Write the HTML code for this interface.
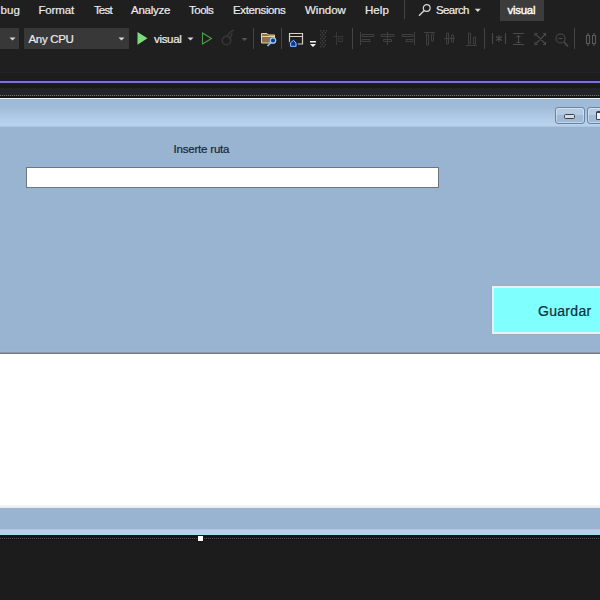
<!DOCTYPE html>
<html><head><meta charset="utf-8">
<style>
html,body{margin:0;padding:0;}
body{width:600px;height:600px;overflow:hidden;background:#1f1f1f;position:relative;font-family:"Liberation Sans",sans-serif;}
.a{position:absolute;}
.m{position:absolute;top:3.3px;font-size:11.5px;color:#ececec;-webkit-text-stroke:0.2px #ececec;line-height:14px;white-space:nowrap;letter-spacing:-0.2px;}
.sep{position:absolute;width:1px;background:#444;}
.ic{position:absolute;}
</style></head><body>
<!-- menu -->
<div class="m" style="left:0.600px;letter-spacing:0">bug</div>
<div class="m" style="left:38.500px;letter-spacing:-0.16px">Format</div>
<div class="m" style="left:94px;letter-spacing:-0.600px"><span style="letter-spacing:-2.400px">T</span>est</div>
<div class="m" style="left:131px;letter-spacing:-0.267px">Analyze</div>
<div class="m" style="left:189px;letter-spacing:-0.500px">Tools</div>
<div class="m" style="left:233px;letter-spacing:-0.379px">Extensions</div>
<div class="m" style="left:305px;letter-spacing:0">Window</div>
<div class="m" style="left:365px;letter-spacing:0.067px">Help</div>
<div class="sep" style="left:404px;top:0;height:19px;"></div>
<svg class="ic" style="left:417px;top:2px" width="16" height="16" viewBox="0 0 16 16"><circle cx="9.700" cy="6" r="3.400" fill="none" stroke="#d8d8d8" stroke-width="1.200"/><path d="M7.200 8.500 L2 13.700" stroke="#d8d8d8" stroke-width="1.300"/></svg>
<div class="m" style="left:436px;letter-spacing:-0.600px">Search</div>
<svg class="ic" style="left:474px;top:8px" width="8" height="5"><path d="M0.800 0.800h6l-3 3.200z" fill="#d8d8d8"/></svg>
<div class="a" style="left:500px;top:0;width:44px;height:21px;background:#3c3c3c;"></div>
<div class="m" style="left:507.500px;color:#fff;letter-spacing:-0.280px;-webkit-text-stroke:0.400px #fff">visual</div>

<!-- toolbar -->
<div class="a" style="left:0;top:28px;width:19px;height:21px;background:#383838;"></div>
<svg class="ic" style="left:9px;top:37px" width="8" height="5"><path d="M0.5 0.5h6l-3 3z" fill="#d8d8d8"/></svg>
<div class="a" style="left:24px;top:28px;width:105px;height:21px;background:#383838;"></div>
<div class="m" style="left:28.500px;top:32px;letter-spacing:-0.333px">Any CPU</div>
<svg class="ic" style="left:117.5px;top:37px" width="8" height="5"><path d="M0.5 0.5h6l-3 3z" fill="#d8d8d8"/></svg>
<svg class="ic" style="left:136px;top:31px" width="14" height="15"><path d="M1.500 1 L11.500 7.300 L1.500 13.700z" fill="#7bdc7b"/></svg>
<div class="m" style="left:154px;top:32px;letter-spacing:-0.320px;color:#f0f0f0">visual</div>
<svg class="ic" style="left:187px;top:37px" width="8" height="5"><path d="M0.5 0.5h6l-3 3z" fill="#d8d8d8"/></svg>
<svg class="ic" style="left:200px;top:31px" width="14" height="15"><path d="M2.5 2 L11.5 7.5 L2.5 13z" fill="none" stroke="#4a9e4a" stroke-width="1.1"/></svg>
<svg class="ic" style="left:0;top:24px" width="600" height="30" viewBox="0 24 600 30">
<!-- dim fire -->
<g fill="none" stroke="#363636" stroke-width="1.6"><circle cx="226.5" cy="40.5" r="4.3"/><path d="M227 37 Q229 32 234 30"/><path d="M229 39 Q232 36 232 33" /></g>
<path d="M241.5 38h6l-3 3z" fill="#555"/>
<!-- separators -->
<g stroke="#454545" stroke-width="1"><path d="M253.5 28v21M281.5 28v21M352.5 28v21M484.5 28v21M574.5 28v21"/></g>
<!-- folder -->
<path d="M261.5 33.5h5.5l1.5 1.500h6v8h-13z" fill="#8a7252" stroke="#ecd28a" stroke-width="1"/>
<path d="M262 36.500h12" stroke="#ecd28a" stroke-width="1"/>
<path d="M271 42.500 L267.500 46" stroke="#8fc2ff" stroke-width="1.6"/>
<circle cx="273" cy="40.500" r="2.700" fill="#0c3c8c" stroke="#9cc8ff" stroke-width="1.200"/>
<!-- window+home -->
<path d="M289.500 33.500h13v10.500h-13z" fill="none" stroke="#d6d0c4" stroke-width="1.200"/>
<path d="M290 36.500h12" stroke="#d6d0c4" stroke-width="1"/>
<path d="M293.300 38.500 L297.300 42.500 V47.500 H289.300 V42.500z" fill="#0b3a8a" stroke="#1f1f1f" stroke-width="1"/>
<path d="M293.300 40.300 L296 43 V46.300 H290.600 V43z" fill="none" stroke="#8fc0ff" stroke-width="1"/>
<!-- overflow -->
<path d="M310 41h6v1.600h-6z M310 44h6l-3 3z" fill="#f0f0f0"/>
<!-- gripper -->
<g fill="#3e3e3e">
<path d="M320 30h1.500v1.500h-1.500z M323 30h1.500v1.500h-1.500z M326 30h1v1.500h-1z M321.500 32h1.500v1.500h-1.500z M324.500 32h1.500v1.500h-1.500z M320 34h1.500v1.500h-1.500z M323 34h1.500v1.500h-1.500z M321.500 36h1.500v1.500h-1.500z M324.500 36h1.500v1.500h-1.500z M320 38h1.500v1.500h-1.500z M323 38h1.500v1.500h-1.500z M321.500 40h1.500v1.500h-1.500z M324.500 40h1.500v1.500h-1.500z M320 42h1.500v1.500h-1.500z M323 42h1.500v1.500h-1.500z M321.500 44h1.500v1.500h-1.500z M324.500 44h1.500v1.500h-1.500z M320 46h1.500v1.500h-1.500z M323 46h1.500v1.500h-1.500z"/>
</g>
<!-- dim layout icons -->
<g fill="none" stroke="#3f3f3f" stroke-width="1">
<path d="M333 36.500h11M336.500 32v13M338.500 38.500h4v3h-4z" stroke="#363636"/>
<path d="M360.500 32v13M362 34.500h12v2h-12zM362 39.500h8v2h-8z"/>
<path d="M387.500 32v13M381 34.500h13v2h-13zM383.500 39.500h8v2h-8z"/>
<path d="M414.500 32v13M402 34.500h11v2h-11zM406 39.500h7v2h-7z"/>
<path d="M424 32.500h11M426.500 34v11h2v-11zM431.500 34v7h2v-7z"/>
<path d="M444 38.500h11M446.500 33v11h2v-11zM451.500 35v7h2v-7z"/>
<path d="M466 45.500h11M468.500 33v11h2v-11zM473.500 37v7h2v-7z"/>
</g>
<g fill="none" stroke="#4a4a4a" stroke-width="1.100">
<path d="M492.500 33v11M505.500 33v11M499 35v7M496 36.500l6 4M502 36.500l-6 4"/>
<path d="M513 33.500h11M513 44.500h11M518.500 35v8M516.500 36.500h4M516.500 42.500h4"/>
<path d="M535 36v-2.500h2.500M543 33.500h2.500v2.500M545.500 42v2.500h-2.500M537.500 44.500h-2.500v-2.500M536 34.500l9 9M545 34.500l-9 9"/>
<circle cx="560.500" cy="38.500" r="4.500"/><path d="M564 42l4 4.500" stroke-width="1.800"/><path d="M558.500 38.500h4"/>
</g>
<g fill="none" stroke="#5a5a5a" stroke-width="1.100">
<path d="M586.500 35.500h3v8h-3zM592.500 35.500h3v8h-3zM588 33v2.500M588 43.500v2.500M594 33v2.500M594 43.500v2.500"/>
</g>
</svg>

<!-- purple line -->
<div class="a" style="left:0;top:72px;width:600px;height:1px;background:#222130;"></div>
<div class="a" style="left:0;top:73px;width:600px;height:7px;background:#1d1d19;"></div>
<div class="a" style="left:0;top:80px;width:600px;height:4px;background:#1c1548;"></div>
<div class="a" style="left:0;top:81px;width:600px;height:2px;background:#8070d2;"></div>
<div class="a" style="left:0;top:84px;width:600px;height:4px;background:#1b1b14;"></div>
<!-- hatch -->
<div class="a" style="left:0;top:88px;width:600px;height:7px;background:#23232a;"></div>
<div class="a" style="left:0;top:95px;width:600px;height:1px;background:repeating-linear-gradient(90deg,#74746e 0 1px,#2a2a2a 1px 2px);"></div>
<div class="a" style="left:0;top:96px;width:600px;height:2px;background:#161616;"></div>

<!-- form -->
<div class="a" style="left:0;top:98px;width:600px;height:255px;background:#99b4d1;"></div>
<div class="a" style="left:0;top:98px;width:600px;height:29px;background:linear-gradient(#9cb8d6 0%,#a0bbd8 30%,#b8d2ee 88%,#b9d3ef 94%,#a5c0de 100%);"></div>
<div class="a" style="left:0;top:98px;width:600px;height:1px;background:#eaf1f8;"></div>
<!-- caption buttons -->
<div class="a" style="left:555px;top:106.500px;width:28px;height:15.500px;border:1px solid #6a84a3;border-radius:3px;background:linear-gradient(#b6cbe3 0 50%,#a1bad6 50% 100%);box-shadow:inset 0 0 0 1px rgba(255,255,255,.4);"></div>
<div class="a" style="left:564px;top:114px;width:9px;height:3px;border:1px solid #38424c;border-radius:1.500px;background:#d6dce2;"></div>
<div class="a" style="left:587px;top:106.500px;width:28px;height:15.500px;border:1px solid #6a84a3;border-radius:3px;background:linear-gradient(#b6cbe3 0 50%,#a1bad6 50% 100%);box-shadow:inset 0 0 0 1px rgba(255,255,255,.4);"></div>
<div class="a" style="left:596px;top:110.500px;width:9px;height:6px;border:1px solid #38424c;border-top-width:2px;border-radius:1.500px;background:#eef1f4;"></div>

<div class="a" style="left:173.500px;top:141.500px;font-size:11.500px;color:#17263a;-webkit-text-stroke:0.2px #17263a;line-height:14px;letter-spacing:-0.200px;white-space:nowrap;">Inserte ruta</div>
<div class="a" style="left:26px;top:167px;width:411px;height:19px;border:1px solid #6b7684;background:#fff;"></div>

<div class="a" style="left:491px;top:285px;width:120px;height:50px;background:#80ffff;border:1px solid #a9adb2;box-shadow:inset 0 0 0 2px #e3f1f8;box-sizing:border-box;"></div>
<div class="a" style="left:538px;top:300.500px;font-size:14px;color:#0f2e3c;-webkit-text-stroke:0.2px #0f2e3c;line-height:20px;letter-spacing:0.300px;white-space:nowrap;">Guardar</div>

<div class="a" style="left:0;top:351px;width:600px;height:1px;background:#a0b4ca;"></div>
<div class="a" style="left:0;top:352px;width:600px;height:1px;background:#8c96a4;"></div>
<div class="a" style="left:0;top:353px;width:600px;height:1px;background:#747b85;"></div>
<div class="a" style="left:0;top:354px;width:600px;height:151px;background:#fff;"></div>
<div class="a" style="left:0;top:505px;width:600px;height:3px;background:linear-gradient(#f6f7f7,#e6eaee);"></div>
<div class="a" style="left:0;top:508px;width:600px;height:22px;background:#99b4d1;"></div>
<div class="a" style="left:0;top:529px;width:600px;height:5px;background:linear-gradient(#a8c2e0,#b7d0ec 30%,#b7d2ee);"></div>
<div class="a" style="left:0;top:534px;width:600px;height:1px;background:#9fdcee;"></div>
<div class="a" style="left:0;top:535px;width:600px;height:65px;background:#1c1c1c;"></div>
<div class="a" style="left:0;top:535px;width:600px;height:5px;background:#141414;"></div>
<div class="a" style="left:0;top:538px;width:600px;height:1px;background:repeating-linear-gradient(90deg,#55525a 0 1px,#1a1a1a 1px 2px);"></div>
<div class="a" style="left:197px;top:535px;width:5px;height:5px;background:#fff;border:1px solid #0c1c1c;"></div>
</body></html>
